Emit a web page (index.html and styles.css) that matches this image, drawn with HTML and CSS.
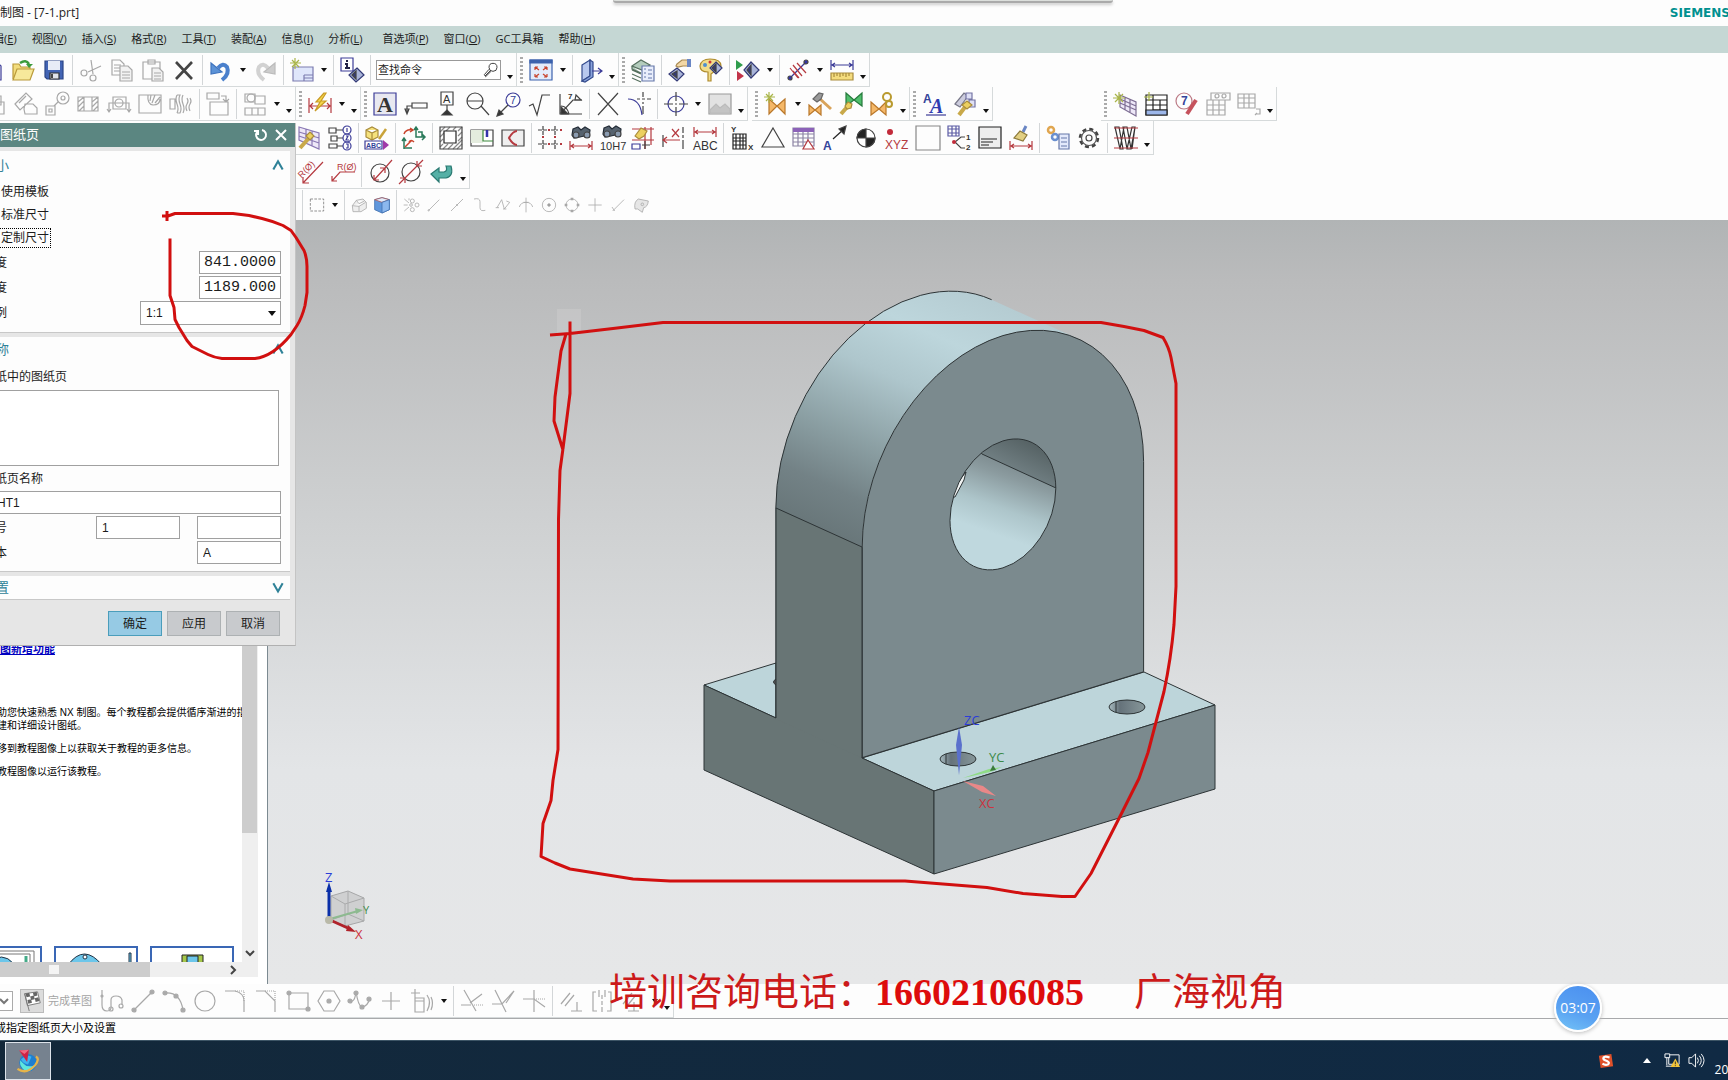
FILE: index.html
```html
<!DOCTYPE html>
<html lang="zh-CN">

<head>
    <title>制图 - [7-1.prt]</title>
    <meta charset="utf-8" />
    <meta name="viewport" content="width=device-width, initial-scale=1" />
    <link rel="stylesheet" href="styles.css">
</head>

<body>
    <header class="titlebar">
        <span>制图 - [7-1.prt]</span>
        <span class="brand">SIEMENS</span>
    </header>
    <div class="topgrip"></div>

    <nav class="menubar">
        <a href="#">编辑(<u>E</u>)</a>
        <a href="#">视图(<u>V</u>)</a>
        <a href="#">插入(<u>S</u>)</a>
        <a href="#">格式(<u>R</u>)</a>
        <a href="#">工具(<u>T</u>)</a>
        <a href="#">装配(<u>A</u>)</a>
        <a href="#">信息(<u>I</u>)</a>
        <a href="#">分析(<u>L</u>)</a>
        <a href="#" class="wide">首选项(<u>P</u>)</a>
        <a href="#">窗口(<u>O</u>)</a>
        <a href="#">GC工具箱</a>
        <a href="#">帮助(<u>H</u>)</a>
    </nav>

    <!-- standard / view / analysis -->
    <div class="row">
        <div class="bar cut1">
            <button class="tb"><svg viewBox="0 0 24 24"><path class="b" d="M5 2h10l6 6v14H5z"/></svg></button>
            <button class="tb"><svg viewBox="0 0 24 24"><path d="M2 21V6h6l2 3h9v3" fill="#f2dc7c" stroke="#b99a3a"/><path d="M2 22l4-11h17l-4 11z" fill="#f7e99b" stroke="#b99a3a"/><path d="M9 5q6-4 9 1" stroke="#3d9c3d" stroke-width="2.5"/><path d="M15 6h7l-4 4z" fill="#3d9c3d" stroke="none"/></svg></button>
            <button class="tb"><svg viewBox="0 0 24 24"><path d="M3 3h18v18H5l-2-2z" fill="#4264b4" stroke="#2c4687"/><path d="M6 3h12v9H6z" fill="#e7ecf6" stroke="none"/><path d="M8 15h9v6H8z" fill="#dfe3ea" stroke="#333"/><path d="M10 16v4" stroke-width="2"/></svg></button>
            <span class="sep"></span>
            <button class="tb off"><svg viewBox="0 0 24 24"><path d="M12 2l2 14M22 8L9 14"/><circle cx="5" cy="15" r="3"/><circle cx="14" cy="20" r="3"/></svg></button>
            <button class="tb off"><svg viewBox="0 0 24 24"><path d="M2 2h8l4 4v11H2zM4 7h7M4 10h7M4 13h6"/><path d="M10 8h8l4 4v11H10z" fill="#f2f2f2"/><path d="M12 14h8M12 17h8M12 20h8"/></svg></button>
            <button class="tb off"><svg viewBox="0 0 24 24"><path d="M2 4h17v17H2zM7 2h7v4H7z"/><path d="M11 10h7l4 4v9H11z" fill="#f2f2f2"/><path d="M13 15h7M13 18h7M13 21h7"/></svg></button>
            <button class="tb"><svg viewBox="0 0 24 24"><path d="M4 4l16 17M20 4L4 21" stroke="#444" stroke-width="2.6"/></svg></button>
            <span class="sep"></span>
            <button class="tb"><svg viewBox="0 0 24 24"><path d="M13 22q8-6 5-13-4-5-9 1" stroke="#4a80cc" stroke-width="4"/><path d="M2 5l11 9-11 2z" fill="#5b92d6" stroke="#3f74bf"/></svg></button>
            <button class="dd"></button>
            <button class="tb"><svg viewBox="0 0 24 24"><path d="M11 22q-8-6-5-13 4-5 9 1" stroke="#d2d2d2" stroke-width="4"/><path d="M22 5l-11 9 11 2z" fill="#ccc" stroke="#bbb"/></svg></button>
            <span class="sep"></span>
            <button class="tb"><svg viewBox="0 0 24 24"><path d="M3 9h20v14H3zM14 17h9M14 17v6M14 20h9" fill="#dfe6fb" stroke="#7c7cb0"/><path d="M5 0v11M0 5h11M2 2l7 7M9 2l-7 7" stroke="#a9b548"/></svg></button>
            <button class="dd"></button>
            <span class="sep"></span>
            <button class="tb"><svg viewBox="0 0 24 24"><path class="b" d="M1 0h12v13H1z" fill="#fff"/><path d="M7 2v2M5 6h2v4M5 10h5" stroke="#224" stroke-width="2"/><path d="M17 10l7 7-8 7-7-7z" fill="#a9b4d8" stroke="#333a77"/><path d="M16 13l-4 4 4 4z" fill="#333a77"/></svg></button>
            <span class="sep"></span>
            <div class="search">
                <input type="text" value="查找命令" aria-label="查找命令">
                <svg viewBox="0 0 24 24"><circle cx="15" cy="8" r="6"/><path d="M11 13l-8 8M9 11l-7 8 2 3 8-8"/></svg>
            </div>
            <button class="dd more"></button>
        </div>
        <div class="bar grip">
            <button class="tb"><svg viewBox="0 0 24 24"><path d="M1 2h22v20H1z" fill="#e3ecfb" stroke="#3c62ad"/><path d="M1 2h22v3H1z" fill="#3c62ad" stroke="#3c62ad"/><path d="M6 9l4 3M18 9l-4 3M6 19l4-3M18 19l-4-3M6 9v3M6 9h3M18 9v3M18 9h-3M6 19v-3M6 19h3M18 19v-3M18 19h-3" stroke="#c8432c"/></svg></button>
            <button class="dd"></button>
            <span class="sep"></span>
            <button class="tb"><svg viewBox="0 0 24 24"><path d="M3 7l8-5v16l-8 5z" fill="#b8c8ee" stroke="#334a8c"/><path d="M11 2l3 2v15l-8 5-3-1 8-5z" fill="#8aa3dc" stroke="#334a8c"/><path class="b" d="M13 13h9M19 10l4 3-4 3"/></svg></button>
            <button class="dd more"></button>
        </div>
        <div class="bar grip">
            <button class="tb"><svg viewBox="0 0 24 24"><path d="M1 8l9-6 9 5-8 5zM1 12l9 4M1 16l9 4M1 20l9 4M1 8v3l9 4" fill="#b3ccbc" stroke="#56705f"/><path d="M11 8h12v15H11z" fill="#e9eefc" stroke="#6678aa"/><path d="M13 11h2M13 15h2M13 19h2M17 12h4M17 16h4M17 20h4" stroke="#6678aa"/></svg></button>
            <span class="sep"></span>
            <button class="tb"><svg viewBox="0 0 24 24"><path d="M9 10l7 6-7 7-8-7z" fill="#a9b4d8" stroke="#333a77"/><path d="M9 13v7l-5-4z" fill="#333a77"/><path d="M9 6l5-4h7v6h-6l-5 1-2-1z" fill="#f3d8a6" stroke="#a98a52"/><path d="M19 1h4v8h-4z" fill="#6a86c4" stroke="none"/></svg></button>
            <button class="tb"><svg viewBox="0 0 24 24"><path d="M1 8q1-7 10-7 11 0 11 7 0 4-5 4l-5 4v7H9v-9q-8 0-8-6z" fill="#f2dd8c" stroke="#ad8a2c"/><circle cx="6" cy="7" r="2" fill="#4f8fd0" stroke="none"/><circle cx="11" cy="4" r="1.500" fill="#c33" stroke="none"/><path d="M17 4l6 6-6 6-6-6z" fill="#a9b4d8" stroke="#333a77"/><path d="M17 6l-4 4 4 4z" fill="#333a77"/></svg></button>
            <span class="sep"></span>
            <button class="tb"><svg viewBox="0 0 24 24"><path d="M0 2l7 5-7 5z" fill="#2f9c4c" stroke="none"/><path d="M1 13l7 5-7 5z" fill="#c2344a" stroke="none"/><path d="M15 4l8 8-8 8-7-8z" fill="#a9b4d8" stroke="#333a77"/><path d="M15 7l-4 5 4 5z" fill="#333a77"/></svg></button>
            <button class="dd"></button>
            <span class="sep"></span>
            <button class="tb"><svg viewBox="0 0 24 24"><path class="b" d="M4 20L20 4"/><path class="r" d="M4 10l8 10M7 7l9 11M11 5l9 10M7 13l6 7"/><circle cx="4" cy="20" r="2" fill="#33a"/><circle cx="20" cy="4" r="2" fill="#33a"/></svg></button>
            <button class="dd"></button>
            <button class="tb"><svg viewBox="0 0 24 24"><path class="b" d="M1 2v10M23 2v10M2 7h20M5 5L2 7l3 2M19 5l3 2-3 2"/><path d="M1 15h22v7H1z" fill="#f4dc7e" stroke="#a98c3c"/><path d="M4 15v4M7 15v3M10 15v4M13 15v3M16 15v4M19 15v3" stroke="#a98c3c"/></svg></button>
            <button class="dd more"></button>
        </div>
    </div>

    <!-- drawing / dimension / annotation -->
    <div class="row">
        <div class="bar cut2">
            <button class="tb off"><svg viewBox="0 0 24 24"><path d="M8 4h10v9H8zM12 10h9v12h-9z"/></svg></button>
            <button class="tb off"><svg viewBox="0 0 24 24"><path d="M1 12L12 1l6 6L6 18zM5 11l7-7M11 12h8l4 4v6H11l-1-5z"/></svg></button>
            <button class="tb off"><svg viewBox="0 0 24 24"><circle cx="18" cy="6" r="6"/><circle cx="18" cy="6" r="2"/><path d="M1 14h9v9H1zM4 17h3v3H4zM9 14l4-4"/></svg></button>
            <button class="tb off"><svg viewBox="0 0 24 24"><path d="M2 5h20v14H2zM8 5v14M16 5v14M2 10l6-5M2 15l6-6M3 19l5-5M16 10l6-5M16 15l6-6M17 19l5-5"/></svg></button>
            <button class="tb off"><svg viewBox="0 0 24 24"><path d="M6 5h13v12H6zM2 20v-9h20v9M0 17l2 3 2-3M20 17l2 3 2-3"/><circle cx="12" cy="11" r="4"/></svg></button>
            <button class="tb off"><svg viewBox="0 0 24 24"><path d="M1 3h22v18H1zM10 3q-1 9 5 10 7 0 7-6M13 3l-1 6M17 3l-3 8M22 5l-5 6"/></svg></button>
            <button class="tb off"><svg viewBox="0 0 24 24"><path d="M1 7h5v10H1zM8 3q-2 4 0 9t0 9M14 3q-2 4 0 9t0 9M8 3h3q-2 4 0 9t0 9H8M18 6q2 3 0 6t0 7M21 6q2 3 0 6t0 7"/></svg></button>
            <span class="sep"></span>
            <button class="tb off"><svg viewBox="0 0 24 24"><path d="M1 1h12v6H1zM4 10h18v13H4zM15 4h5v6M17 7l3 3 3-3"/></svg></button>
            <span class="sep"></span>
            <button class="tb off"><svg viewBox="0 0 24 24"><path d="M2 2h10v8H2zM12 4h10v8H12zM2 16h20v7H2zM9 16v7M15 16v7"/><circle cx="8" cy="6" r="4"/></svg></button>
            <button class="dd"></button>
            <button class="dd more"></button>
        </div>
        <div class="bar grip">
            <button class="tb"><svg viewBox="0 0 24 24"><path class="r" d="M1 6v15M23 6v15M2 14h20M5 11l-3 3 3 3M19 11l3 3-3 3"/><path d="M16 1L8 10h4l-5 9 11-10h-5l5-8z" fill="#f5d84e" stroke="#c99b25"/></svg></button>
            <button class="dd"></button>
            <button class="dd more"></button>
        </div>
        <div class="bar grip">
            <button class="tb"><svg viewBox="0 0 24 24"><path class="b" d="M1 1h22v22H1z" fill="#e8e8f0"/><text x="4" y="20" class="ser">A</text></svg></button>
            <button class="tb"><svg viewBox="0 0 24 24"><path d="M3 20v-6h5M8 11h15v5H8zM1 17l2 5 2-5z"/></svg></button>
            <button class="tb"><svg viewBox="0 0 24 24"><path d="M6 0h12v13H6zM12 13v8"/><path d="M7 23l5-5 5 5z" fill="#333"/><text x="8" y="11" class="t11">A</text></svg></button>
            <button class="tb"><svg viewBox="0 0 24 24"><circle cx="9" cy="9" r="8"/><path d="M1 9h16M15 14l8 9"/></svg></button>
            <button class="tb"><svg viewBox="0 0 24 24"><circle class="b" cx="16" cy="8" r="7"/><text x="13" y="12" class="t11 tb1">7</text><path d="M11 13l-9 9"/><path d="M0 24l2-6 4 4z" fill="#333"/></svg></button>
            <button class="tb"><svg viewBox="0 0 24 24"><path d="M1 14l4-2 4 11 5-20h8"/></svg></button>
            <button class="tb"><svg viewBox="0 0 24 24"><path d="M1 2v20h22M2 21L14 8h9M2 14q6 0 8 8"/><path d="M2 22v-7l7 7z" fill="#333"/><text x="9" y="7" class="t8">7</text><path d="M17 3l5 5h-6z"/></svg></button>
            <span class="sep"></span>
            <button class="tb"><svg viewBox="0 0 24 24"><path d="M2 1l20 22M22 1L2 23"/></svg></button>
            <button class="tb"><svg viewBox="0 0 24 24"><path d="M16 0v5M16 10v2M16 14v8M10 7h3M15 7h3M20 7h4"/><path class="b" d="M1 7q12 0 14 16"/></svg></button>
            <span class="sep"></span>
            <button class="tb"><svg viewBox="0 0 24 24"><circle class="b" cx="12" cy="12" r="8"/><path d="M12 0v9M12 15v9M0 12h9M15 12h9M11 12h2"/></svg></button>
            <button class="dd"></button>
            <button class="tb"><svg viewBox="0 0 24 24"><path d="M1 2h22v20H1z" fill="#e2e2e2" stroke="#999"/><path d="M2 18l6-6 4 4 5-4 5 5v4H2z" fill="#c4c4c4" stroke="#bbb"/></svg></button>
            <button class="dd more"></button>
        </div>
        <div class="bar grip gap-s">
            <button class="tb"><svg viewBox="0 0 24 24"><path d="M5 7l8 7-8 8zM21 7l-8 7 8 8z" fill="#f5b868" stroke="#b9772a"/><path d="M5 0v11M0 5h11M2 2l7 7M9 2L2 9" stroke="#a9b548"/></svg></button>
            <button class="dd"></button>
            <button class="tb"><svg viewBox="0 0 24 24"><path d="M1 13l6 5-6 5zM13 13l-6 5 6 5z" fill="#f5b868" stroke="#b9772a"/><path d="M11 6l12 11" stroke="#d9a35a" stroke-width="3"/><path d="M5 7l6-6 4 1-2 5-4 3z" fill="#999" stroke="#666"/></svg></button>
            <button class="tb"><svg viewBox="0 0 24 24"><path d="M7 1l8 7-8 6zM23 1l-8 7 8 6z" fill="#4fbe6c" stroke="#267a3c"/><path d="M2 22l7-8" stroke="#c9a94a" stroke-width="4"/><path d="M6 14l3-4 4 2-1 4-4 1z" fill="#ecd060" stroke="#a98c3c"/></svg></button>
            <button class="tb"><svg viewBox="0 0 24 24"><path d="M1 10l8 7-8 6zM16 10l-7 7 7 6z" fill="#f5b868" stroke="#b9772a"/><circle cx="17" cy="5" r="4" stroke="#b99a2f" stroke-width="2"/><circle cx="19" cy="12" r="3" stroke="#b99a2f" stroke-width="2"/></svg></button>
            <button class="dd more"></button>
        </div>
        <div class="bar grip">
            <button class="tb"><svg viewBox="0 0 24 24"><text x="1" y="11" class="t12 tb1">A</text><text x="8" y="21" class="ser it">A</text><path class="b" d="M4 23h20"/></svg></button>
            <button class="tb"><svg viewBox="0 0 24 24"><path d="M2 12l9-11 4 3-8 11z" fill="#ccd" stroke="#778"/><path d="M13 1h6v6h-6zM16 8h6v7h-6z" fill="#dfe0f5" stroke="#7474a4"/><path d="M6 23l6-8" stroke="#c9a94a" stroke-width="4"/><path d="M9 13l5-4 5 4-5 4z" fill="#ecd060" stroke="#a98c3c"/></svg></button>
            <button class="dd more"></button>
        </div>
        <div class="bar grip gap-l">
            <button class="tb"><svg viewBox="0 0 24 24"><path d="M7 3l16 7v14L7 15zM7 7l16 7M7 11l16 7M12 5v13M17 7v13" fill="#eee8f8" stroke="#7d6d93"/><path d="M6 0v12M0 6h12M2 2l8 8M10 2l-8 8" stroke="#a9b548"/></svg></button>
            <button class="tb"><svg viewBox="0 0 24 24"><path d="M2 3h21v20H2zM2 8h21M2 13h21M9 3v20M9 18h14M16 8v15" fill="#fff" stroke="#222"/><path d="M2 18h21v5H2z" fill="#9db7ea" stroke="#222"/><path d="M5 0v9M0 5h9" stroke="#a9b548"/></svg></button>
            <button class="tb"><svg viewBox="0 0 24 24"><circle cx="9" cy="9" r="8" stroke="#bc7b86"/><text x="6" y="13" class="t12 tb1">7</text><path d="M12 22l9-14" stroke="#c5525c" stroke-width="4"/></svg></button>
            <button class="tb off"><svg viewBox="0 0 24 24"><path d="M5 1h19v7H5zM1 8h18v15H1zM1 13h18M7 8v15M13 8v15M1 18h18"/><circle cx="11" cy="4" r="2"/><circle cx="18" cy="4" r="2"/></svg></button>
            <button class="tb off"><svg viewBox="0 0 24 24"><path d="M1 2h17v14H1zM1 6h17M1 11h17M7 2v14M12 2v14M19 17h4v5h-4M20 21l-2 2"/></svg></button>
            <button class="dd more"></button>
        </div>
    </div>

    <!-- drafting tools -->
    <div class="row">
        <div class="bar from3">
            <button class="tb"><svg viewBox="0 0 24 24"><path d="M2 1l20 6v16L2 14zM2 6l20 6M2 10l20 7M9 3v14M15 5v15" fill="#eee8f8" stroke="#8a78b4"/><path d="M3 22l9-10" stroke="#c9a94a" stroke-width="4"/><path d="M9 10l4-4 4 4-4 4z" fill="#ecd060" stroke="#a98c3c"/></svg></button>
            <button class="tb"><svg viewBox="0 0 24 24"><path d="M1 2h7v5H1zM3 10h6v5H3zM1 18h8v4H1zM8 4h7M9 12h6M9 20h6"/><circle class="b" cx="19" cy="4" r="4"/><circle class="b" cx="19" cy="12" r="4"/><circle class="b" cx="19" cy="20" r="4"/><path class="b" d="M19 2v4M18 10h2l-2 4h3M18 18h2v4h-2"/></svg></button>
            <span class="sep"></span>
            <button class="tb"><svg viewBox="0 0 24 24"><path d="M1 4l6-3 6 3v7l-6 3-6-3zM1 4l6 3 6-3M7 7v7" fill="#f6e27c" stroke="#a98c3c"/><path d="M21 3l-7 10" stroke="#c9a33a" stroke-width="2.500"/><path class="b" d="M0 15h17v8H0z" fill="#fff"/><text x="1" y="22" class="t7 tb1">ABC</text><path d="M18 14l6 5-6 5z" fill="#a03aa8" stroke="none"/></svg></button>
            <span class="sep"></span>
            <button class="tb"><svg viewBox="0 0 24 24"><path d="M2 23V13M0 15l2-3 2 3M2 22h8" stroke="#2a7a5a" stroke-width="1.500"/><path d="M14 2v9h9M12 4l2-3 2 3M20 8l3 3-3 3M16 6h4v5" stroke="#2a7a5a" stroke-width="1.500"/><path d="M2 8q2-5 8-4M8 2l3 2-3 2M3 21l6-6M7 16q2-3 5 0" stroke="#c8432c" stroke-width="1.500"/></svg></button>
            <span class="sep"></span>
            <button class="tb"><svg viewBox="0 0 24 24"><path d="M1 6l5-5M1 11L11 1M1 16L4 13M1 21l3-3M14 4l3-3M19 5l4-4M19 10l4-4M19 15l4-4M4 23l5-5M9 23l5-5M14 23l9-9M18 23l5-5" stroke="#888"/><path d="M1 1h22v22H1z"/><path d="M5 5h12v12H5z" fill="#fff" stroke="#222"/></svg></button>
            <button class="tb"><svg viewBox="0 0 24 24"><path d="M1 4h22v16H1z" fill="#fff"/><path d="M1 4h12v13H1z" fill="#e4ecde" stroke="none"/><path d="M13 4v11h10" stroke="#3c8a3c"/><path d="M17 4v7" stroke="#33a" stroke-width="2.500"/></svg></button>
            <button class="tb"><svg viewBox="0 0 24 24"><path d="M1 4h22v16H1z" fill="#efefef"/><path class="r" d="M16 5q-4 0-8 7 4 7 8 7" stroke-width="2"/></svg></button>
            <span class="sep"></span>
            <button class="tb"><svg viewBox="0 0 24 24"><path d="M5 0v9M0 4h10M17 0v9M13 4h7M5 14v9M0 18h10M17 14v9M13 18h7" stroke-dasharray="4 1"/><path class="r" d="M10 4h2M22 4h2M10 18h2M22 18h2M5 10v2M17 10v2" stroke-width="2"/></svg></button>
            <button class="tb"><svg viewBox="0 0 24 24"><path d="M4 3l5-2 3 3 4-3 5 3-1 7-5-1-4 1-6 1-2-3z" fill="#56626e" stroke="#222b36"/><circle cx="7" cy="9" r="3" fill="#8a9bb0"/><circle cx="18" cy="9" r="3" fill="#8a9bb0"/><path class="r" d="M1 15v9M23 15v9M2 20h20M5 18l-3 2 3 2M19 18l3 2-3 2"/></svg></button>
            <button class="tb"><svg viewBox="0 0 24 24"><path d="M4 2l5-2 3 3 4-3 5 3-1 7-5-1-4 1-6 1-2-3z" fill="#56626e" stroke="#222b36"/><circle cx="7" cy="8" r="3" fill="#8a9bb0"/><circle cx="18" cy="8" r="3" fill="#8a9bb0"/><text x="0" y="24" class="t11">10H7</text></svg></button>
            <button class="tb"><svg viewBox="0 0 24 24"><path class="r" d="M1 3h22M1 14h22M14 1v22M20 1v18"/><path d="M4 10l6-8 6 3-3 5-5 3z" fill="#ecd060" stroke="#a98c3c"/><path class="b" d="M1 18h8v5H1z"/><path d="M11 19h8M14 15v8"/></svg></button>
            <button class="tb"><svg viewBox="0 0 24 24"><path d="M1 9v12M21 1v6M21 9v3M21 14v9"/><path class="r" d="M1 14h17M5 11l-4 3 4 3M10 3l7 8M17 3l-7 8"/></svg></button>
            <button class="tb"><svg viewBox="0 0 24 24"><path class="r" d="M1 1v10M23 1v10M2 6h20M5 4L2 6l3 2M19 4l3 2-3 2"/><text x="0" y="24" class="t12n">ABC</text></svg></button>
            <span class="sep"></span>
            <button class="tb"><svg viewBox="0 0 24 24"><path d="M3 8h13v15H3zM3 12h13M3 15h13M3 19h13M6 8v15M10 8v15M13 8v15" stroke="#222"/><text x="1" y="6" class="t8">Y</text><text x="18" y="24" class="t8">X</text></svg></button>
            <button class="tb"><svg viewBox="0 0 24 24"><path d="M12 2l11 19H1z"/></svg></button>
            <button class="tb"><svg viewBox="0 0 24 24"><path d="M1 2h21v18H1zM1 8h21M1 12h21M1 16h21M6 2v18M11 2v18M16 2v18" stroke="#8c84a4"/><path d="M1 2h21v4H1z" fill="#8c62b8" stroke="none"/><path class="r" d="M16 14l6 9H11z" fill="#fff"/></svg></button>
            <button class="tb"><svg viewBox="0 0 24 24"><text x="0" y="24" class="t12 tb1">A</text><path d="M10 13L21 3" stroke="#222"/><path d="M23 0l-2 8-5-5z" fill="#222"/></svg></button>
            <button class="tb"><svg viewBox="0 0 24 24"><circle cx="12" cy="12" r="9" fill="#fff"/><path d="M12 12V3a9 9 0 0 0-9 9zM12 12v9a9 9 0 0 0 9-9z" fill="#222"/></svg></button>
            <button class="tb"><svg viewBox="0 0 24 24"><circle cx="5" cy="6" r="3" fill="#c22b3a" stroke="none"/><text x="0" y="23" class="t12n tr">XYZ</text></svg></button>
            <button class="tb"><svg viewBox="0 0 24 24"><path d="M0 0h24v24H0z" stroke="#888"/></svg></button>
            <button class="tb"><svg viewBox="0 0 24 24"><path d="M1 0h11v10H1zM1 3h11M1 7h11M5 0v10M9 0v10" stroke="#5a5aa4"/><path d="M18 11h-4l-6 5 6 6h4"/><circle cx="7" cy="16" r="2" fill="#c22b3a" stroke="none"/><text x="19" y="14" class="t8">1</text><text x="19" y="24" class="t8">2</text></svg></button>
            <button class="tb"><svg viewBox="0 0 24 24"><path d="M1 1h22v21H1z" fill="#eee" stroke="#222"/><path d="M3 13h16M3 16h12M3 19h8" stroke="#222"/></svg></button>
            <button class="tb"><svg viewBox="0 0 24 24"><path d="M17 0l-3 6" stroke="#6a86c4" stroke-width="3"/><path d="M11 5l7 4-4 6-9-3z" fill="#e2cf82" stroke="#8c7a3c"/><path class="r" d="M1 15v9M23 15v9M2 20h20M5 18l-3 2 3 2M19 18l3 2-3 2"/></svg></button>
            <span class="sep"></span>
            <button class="tb"><svg viewBox="0 0 24 24"><circle cx="5" cy="4" r="3" stroke="#e0a650" stroke-width="2.500"/><circle cx="9" cy="11" r="3" stroke="#6a90d0" stroke-width="2.500"/><path d="M13 8h10v15H13z" fill="#e3e9fb" stroke="#6678aa"/><path d="M15 12h6M15 16h6M15 20h6" stroke="#6678aa"/></svg></button>
            <button class="tb"><svg viewBox="0 0 24 24"><circle cx="12" cy="12" r="9" stroke-width="2.500" stroke-dasharray="4 3.07"/><circle cx="12" cy="12" r="7.500" stroke="#555"/><circle cx="12" cy="12" r="3"/></svg></button>
            <span class="sep"></span>
            <button class="tb"><svg viewBox="0 0 24 24"><path d="M1 1h4l4 22h-3zM9 1h4l4 22h-4zM9 23h-3L10 1M17 23h-4L18 1h3zM21 1l-3 22" stroke="#333"/><path class="r" d="M0 2h24M0 12h24M0 22h24"/></svg></button>
            <button class="dd more"></button>
        </div>
    </div>

    <!-- radius / diameter -->
    <div class="row">
        <div class="bar from4">
            <button class="tb"><svg viewBox="0 0 24 24"><path class="r" d="M23 2L3 23M3 17v6h6"/><text x="1" y="17" class="t9 tr" transform="rotate(-45 3 17)">R(Ø)</text></svg></button>
            <button class="tb"><svg viewBox="0 0 24 24"><path class="r" d="M24 12H9L1 21M1 16v5h5"/><text x="6" y="10" class="t9 tr">R(Ø)</text></svg></button>
            <span class="sep"></span>
            <button class="tb"><svg viewBox="0 0 24 24"><circle cx="12" cy="13" r="9"/><path class="r" d="M6 20L17 8M6 15v5h5M12 8h5v5"/><path class="r" d="M17 8l7-8"/></svg></button>
            <button class="tb"><svg viewBox="0 0 24 24"><circle cx="12" cy="12" r="9"/><path class="r" d="M0 24L24 0M1 18l5 0 0 5M18 1v5h5"/></svg></button>
            <button class="tb"><svg viewBox="0 0 24 24"><path d="M1 14l8-6v4h5q4-1 2-6h5q3 10-5 12H9v4z" fill="#56b0a6" stroke="#2a7a72"/></svg></button>
            <button class="dd more"></button>
        </div>
    </div>

    <!-- selection bar -->
    <div class="row selbar">
        <div class="bar from5">
            <span class="sep"></span>
            <button class="tb off"><svg viewBox="0 0 24 24"><path d="M2 3h20v18H2z" stroke-dasharray="4 2" stroke="#777"/></svg></button>
            <button class="dd"></button>
            <span class="sep"></span>
            <button class="tb off"><svg viewBox="0 0 24 24"><path d="M2 13l6-8 10-2 5 5v9l-8 5H3zM2 13l10 1 10-6M12 14v7M8 5l4 5 8-4" fill="#eee"/></svg></button>
            <button class="tb"><svg viewBox="0 0 24 24"><path d="M1 4l11-3 11 3v15l-11 5-11-5z" fill="#5f97dc" stroke="#3f6fae"/><path d="M1 4l11 4 11-4-11-3z" fill="#e2ecfa" stroke="#a55"/><path d="M12 8v16l11-5V4z" fill="#8cb8ee" stroke="#3f6fae"/></svg></button>
            <span class="sep"></span>
            <button class="tb off"><svg viewBox="0 0 24 24"><path d="M2 3l7 6M1 12h6M2 21l7-6M9 2v3"/><circle cx="14" cy="6" r="3"/><circle cx="21" cy="12" r="3"/><circle cx="14" cy="19" r="3"/><circle cx="12" cy="12" r="2"/></svg></button>
            <button class="tb off"><svg viewBox="0 0 24 24"><path d="M4 20L20 4"/><circle cx="4" cy="20" r="1"/></svg></button>
            <button class="tb off"><svg viewBox="0 0 24 24"><path d="M3 21L21 3"/><circle cx="12" cy="12" r="1"/></svg></button>
            <button class="tb off"><svg viewBox="0 0 24 24"><path d="M3 3q9-2 9 4v9q0 6 8 4"/></svg></button>
            <button class="tb off"><svg viewBox="0 0 24 24"><path d="M3 16l7-12 4 14 8-10M1 16h5M12 18h5M22 8l-5-2"/></svg></button>
            <button class="tb off"><svg viewBox="0 0 24 24"><path d="M12 1v22M2 15q2-7 10-7t10 7M8 8h8"/></svg></button>
            <button class="tb off"><svg viewBox="0 0 24 24"><circle cx="12" cy="12" r="10"/><circle cx="12" cy="12" r="2" fill="#999"/></svg></button>
            <button class="tb off"><svg viewBox="0 0 24 24"><circle cx="12" cy="12" r="9"/><path d="M12 1v4M12 19v4M1 12h4M19 12h4" stroke-width="4"/></svg></button>
            <button class="tb off"><svg viewBox="0 0 24 24"><path d="M12 2v20M2 12h20"/></svg></button>
            <button class="tb off"><svg viewBox="0 0 24 24"><path d="M4 21L21 4M3 15l4 6"/></svg></button>
            <button class="tb off"><svg viewBox="0 0 24 24"><path d="M3 18q-2-11 5-15l15 3q-1 9-7 10l-2 7-7-5z" fill="#e6e6e6"/><circle cx="14" cy="11" r="2"/></svg></button>
        </div>
    </div>

    <main class="work">
        <aside class="resource">
            <div class="doc">
                <div class="doc-text">
                    <a href="#">制图新增功能</a>
                    <p>将帮助您快速熟悉 NX 制图。每个教程都会提供循序渐进的指导<br>于创建和详细设计图纸。</p>
                    <p>光标移到教程图像上以获取关于教程的更多信息。</p>
                    <p>单击教程图像以运行该教程。</p>
                </div>
                <div class="thumbs">
                    <div class="thumb"><svg viewBox="0 0 80 16"><path d="M0 3h74v14M0 6h70v11" stroke="#777"/><path d="M28 16q14-14 26 0z" fill="#6cc6ea" stroke="#234"/><path d="M66 8v8" stroke="#4a8" stroke-width="3"/></svg></div>
                    <div class="thumb"><svg viewBox="0 0 80 16"><path d="M12 17q16-22 34 0z" fill="#6cc6ea" stroke="#234"/><circle cx="29" cy="9" r="2" fill="#fff" stroke="#234"/><path d="M73 5h2v12h-2z" stroke="#234" fill="#6cc6ea"/></svg></div>
                    <div class="thumb"><svg viewBox="0 0 80 16"><path d="M30 7h21v10H30z" fill="#a6c84a" stroke="#222"/><path d="M35 8h11v9H35z" fill="#6cc6ea" stroke="#222"/></svg></div>
                </div>
            </div>
            <div class="vscroll"><span class="vthumb"></span><svg viewBox="0 0 16 16"><path d="M4 6l4 4 4-4"/></svg></div>
            <div class="hscroll"><span class="hthumb"></span><svg viewBox="0 0 16 16"><path d="M6 4l4 4-4 4"/></svg></div>
        </aside>

        <section class="viewport">
            <svg class="scene" viewBox="268 220 1460 764" preserveAspectRatio="xMinYMin meet">
                <defs>
                    <linearGradient id="gArch" gradientUnits="userSpaceOnUse" x1="-.283" y1=".448" x2=".534" y2="-.845">
                        <stop offset="0" stop-color="#69777a"/>
                        <stop offset=".15" stop-color="#738286"/>
                        <stop offset=".34" stop-color="#8b9fa3"/>
                        <stop offset=".6" stop-color="#aec6cc"/>
                        <stop offset=".8" stop-color="#bdd6dc"/>
                        <stop offset="1" stop-color="#b5ccd2"/>
                    </linearGradient>
                    <linearGradient id="gBore" gradientUnits="userSpaceOnUse" x1="1025" y1="455" x2="990" y2="555">
                        <stop offset="0" stop-color="#738084"/>
                        <stop offset=".25" stop-color="#8b9b9f"/>
                        <stop offset=".55" stop-color="#adc5ca"/>
                        <stop offset=".8" stop-color="#bfd8de"/>
                    </linearGradient>
                    <linearGradient id="gBoreTop" gradientUnits="userSpaceOnUse" x1="1035" y1="440" x2="1015" y2="480">
                        <stop offset="0" stop-color="#535f61"/>
                        <stop offset="1" stop-color="#77868a"/>
                    </linearGradient>
                    <linearGradient id="gPin">
                        <stop offset="0" stop-color="#a9bdc2"/>
                        <stop offset=".3" stop-color="#65727a"/>
                        <stop offset="1" stop-color="#87979a"/>
                    </linearGradient>
                    <clipPath id="bore"><circle r=".376" transform="matrix(140.7 -42.9 0 168.8 1002.9 504.4)"/></clipPath>
                </defs>
                <rect x="557" y="309" width="24" height="24" fill="#fff" opacity=".12"/>
                <g class="part">
                    <path fill="#bdd5da" d="M704 685l72-22v55zM862 758l282-86 71 33-281 86z"/>
                    <path fill="#687575" d="M704 685l72 33V508l86 39v211l72 33v83l-230-104z"/>
                    <path fill="#7b8a8e" d="M934 791l281-86v84l-281 85z"/>
                    <path d="M776 679q-5 3 0 6" fill="#555"/>
                    <g transform="matrix(140.7 -42.9 0 168.8 1002.9 504.4)">
                        <path fill="url(#gArch)" d="M-1 .254L-1.614-.134V-.388A1 1 0 0 1-.08-1.233L.534-.845A1 1 0 0 0-1 0z" stroke="none"/>
                        <path d="M-1.614-.388A1 1 0 0 1-.08-1.233"/>
                        <path fill="#7b8a8e" d="M-1 1.246V0A1 1 0 0 1 1 0V1.246z"/>
                    </g>
                    <path fill="#687575" d="M776 508l86 39v211l-86-39z" stroke="none"/>
                    <path d="M776 718V508l86 39v211"/>
                    <g clip-path="url(#bore)">
                        <path fill="url(#gBore)" stroke="none" d="M940 430h130v150H940z"/>
                        <path fill="url(#gBoreTop)" d="M982 454l74 34 10-60H960z"/>
                        <path fill="#f1f4f4" d="M953 497q3-14 13-25l-2 8-9 17z"/>
                    </g>
                    <circle r=".376" transform="matrix(140.7 -42.9 0 168.8 1002.9 504.4)"/>
                    <ellipse cx="958" cy="759" rx="18" ry="7" fill="url(#gPin)"/>
                    <ellipse cx="1127" cy="707" rx="18" ry="7" fill="url(#gPin)"/>
                    <path d="M946 754v10M1116 702v10"/>
                </g>
                <g class="axes">
                    <path d="M959 775l-3-30 3-18 3 18z" fill="#5a70cc"/>
                    <path d="M963 778l26-9 13-2-12 5z" fill="#8fdc86"/>
                    <path d="M990 771l3-6 3 5z" fill="#3b7a3b"/>
                    <path d="M963 781l20 5 13 10-14-4z" fill="#e88888"/>
                    <text x="964" y="725" fill="#2c3ed8">ZC</text>
                    <text x="989" y="762" fill="#3d8a48">YC</text>
                    <text x="979" y="808" fill="#cc3340">XC</text>
                </g>
                <g class="axes">
                    <path d="M331 896l17-5 16 7v23l-19 5-14-6z" fill="#cfd0d1" stroke="#a6a7a8"/>
                    <path d="M331 896l14 8 19-6M345 904v22M348 891v23l16 7M348 914l-17 6" fill="none" stroke="#aaabac"/>
                    <path d="M330 919l28-8" stroke="#8dba90" stroke-width="2"/><path d="M355 908l8 2-7 4z" fill="#8dba90"/>
                    <path d="M329 919v-30" stroke="#0a2fa8" stroke-width="3"/><path d="M326 892l3-10 3 10z" fill="#0a2fa8"/>
                    <path d="M330 920l20 9" stroke="#b0222a" stroke-width="3"/><path d="M348 925l8 7-10-1z" fill="#b0222a"/>
                    <circle cx="329" cy="920" r="4" fill="#b9b9a8"/>
                    <text x="325" y="882" fill="#2c3ed8">Z</text>
                    <text x="363" y="914" fill="#3d8a48" class="sm">Y</text>
                    <text x="355" y="939" fill="#cc3340">X</text>
                </g>
            </svg>
        </section>
    </main>

    <div class="row sketch">
        <div class="bar cut6">
            <select class="mini" aria-label="草图"><option></option></select>
            <button class="finish" disabled><svg viewBox="0 0 24 24"><path d="M4 4l14-2 3 12-14 3z" fill="#fff" stroke="#777"/><path d="M5 4l4-1 1 4-4 1zM13 3l4-1 1 4-4 1zM10 7l4-1 1 4-4 1zM7 11l4-1 1 4-4 1zM15 9l4-1 1 4-4 1z" fill="#666" stroke="none"/><path d="M4 4l5 19" stroke="#777"/></svg><span>完成草图</span></button>
            <button class="tb off"><svg viewBox="0 0 24 24"><path d="M2 1v15q0 6 5 6t4-6V11q0-4 5-4t6 4v5"/><circle cx="2" cy="7" r="1"/><circle cx="11" cy="20" r="2"/><circle cx="21" cy="17" r="2"/></svg></button>
            <button class="tb off"><svg viewBox="0 0 24 24"><path d="M3 21L21 3"/><circle cx="3" cy="21" r="2" fill="#aaa"/><circle cx="21" cy="3" r="2" fill="#aaa"/></svg></button>
            <button class="tb off"><svg viewBox="0 0 24 24"><path d="M2 4q16-2 19 17"/><circle cx="3" cy="4" r="2" fill="#aaa"/><circle cx="14" cy="7" r="2" fill="#aaa"/><circle cx="21" cy="21" r="2" fill="#aaa"/></svg></button>
            <button class="tb off"><svg viewBox="0 0 24 24"><circle cx="12" cy="12" r="10"/></svg></button>
            <button class="tb off"><svg viewBox="0 0 24 24"><path d="M1 2h10q9 2 9 10v11"/><path d="M11 2h9v10" stroke-dasharray="1 1"/></svg></button>
            <button class="tb off"><svg viewBox="0 0 24 24"><path d="M1 2h9l10 10v11"/><path d="M10 2h10v10" stroke-dasharray="1 1"/></svg></button>
            <button class="tb off"><svg viewBox="0 0 24 24"><path d="M3 4h19v16H3z"/><circle cx="3" cy="4" r="2" fill="#aaa"/><circle cx="22" cy="20" r="2" fill="#aaa"/></svg></button>
            <button class="tb off"><svg viewBox="0 0 24 24"><path d="M7 2h10l6 10-6 10H7L1 12z"/><circle cx="12" cy="12" r="2" fill="#aaa"/></svg></button>
            <button class="tb off"><svg viewBox="0 0 24 24"><path d="M2 12q5 2 6-10 2 15 6 16 6-1 8-9"/><circle cx="2" cy="12" r="2" fill="#aaa"/><circle cx="8" cy="4" r="2" fill="#aaa"/><circle cx="14" cy="18" r="2" fill="#aaa"/><circle cx="21" cy="10" r="2" fill="#aaa"/></svg></button>
            <button class="tb off"><svg viewBox="0 0 24 24"><path d="M12 3v18M3 12h18"/></svg></button>
            <button class="tb off"><svg viewBox="0 0 24 24"><path d="M5 0v9M1 4h9M5 9h9v14H5zM5 12h9M17 6q5 7 0 16M21 8q3 6 0 13"/></svg></button>
            <button class="dd"></button>
            <span class="sep"></span>
            <button class="tb off"><svg viewBox="0 0 24 24"><path d="M4 1l12 21M1 16h10M10 14l12-9"/><path d="M14 16h9" stroke-dasharray="1 1"/></svg></button>
            <button class="tb off"><svg viewBox="0 0 24 24"><path d="M4 1l11 22M1 15h10l12-13-8 12"/></svg></button>
            <button class="tb off"><svg viewBox="0 0 24 24"><path d="M12 1v22M1 10h11l11 8"/><path d="M12 10h11" stroke-dasharray="1 1"/></svg></button>
            <span class="sep"></span>
            <button class="tb off"><svg viewBox="0 0 24 24"><path d="M2 15L11 4M6 17L15 6M12 22h11M18 13v9"/></svg></button>
            <button class="tb off"><svg viewBox="0 0 24 24"><path d="M6 3H3v19h4M18 3h3v19h-4M9 1v7M15 1v7M12 6v4M12 12v4M12 18v5"/></svg></button>
            <button class="tb off"><svg viewBox="0 0 24 24"><path d="M2 15L11 4M6 17L15 6M7 22h11M13 13v9"/></svg></button>
            <button class="dd"></button>
            <button class="dd more"></button>
        </div>
    </div>
    <div class="status">择或指定图纸页大小及设置</div>

    <footer class="taskbar">
        <button class="app"><svg viewBox="0 0 32 32"><circle cx="16" cy="18" r="10" fill="#1f7fd0"/><path d="M7 15q-1 8 6 12 8 1 10-6-8 3-12-2z" fill="#5fe6dc"/><path d="M8 14q6-6 12-3l-4 9q-6-1-8-6z" fill="#3fb4ee"/><path d="M4 25q10 7 20-4 6-8 1-10" fill="none" stroke="#e6b44a" stroke-width="2.500"/><path d="M6 4l11-1-2 14z" fill="#cf2244"/><path d="M6 4l11-1-5 5z" fill="#ee6a80"/></svg></button>
        <div class="tray">
            <svg class="sogou" viewBox="0 0 18 18"><path d="M1 3l14-2 2 14-14 2z" fill="#e0512a"/><path d="M13 5q-7-2-7 1 0 2 4 3 4 2 1 4-3 1-6-1" fill="none" stroke="#fff" stroke-width="2.500"/></svg>
            <svg class="up" viewBox="0 0 8 8"><path d="M0 6l4-5 4 5z" fill="#fff"/></svg>
            <svg class="net" viewBox="0 0 18 18"><path d="M1 2h5v4H1zM6 3h10v10H5V6M3 6v8M2 15h8" fill="none" stroke="#fff"/><path d="M12 7l5 9H7z" fill="#f2c53a"/><path d="M12 10v3M12 14v1" stroke="#333"/></svg>
            <svg class="net" viewBox="0 0 18 18"><path d="M1 6h3l4-4v14l-4-4H1zM10 6q2 3 0 6M12 4q4 5 0 10M14 2q6 7 0 14" fill="none" stroke="#fff"/></svg>
            <span class="clock">2019</span>
        </div>
    </footer>

    <form class="dialog">
        <div class="dlg-head">
            <span>图纸页</span>
            <button type="button"><svg viewBox="0 0 16 16"><path d="M4 5a5 5 0 1 0 5-2M1 4h4v4" /></svg></button>
            <button type="button"><svg viewBox="0 0 16 16"><path d="M3 3l10 10M13 3L3 13"/></svg></button>
        </div>
        <div class="sect">
            <h3>大小<svg viewBox="0 0 12 12"><path d="M2 9l4-7 4 7"/></svg></h3>
            <label class="opt"><input type="radio" name="size"><span>使用模板</span></label>
            <label class="opt"><input type="radio" name="size"><span>标准尺寸</span></label>
            <label class="opt"><input type="radio" name="size" checked><span class="focus">定制尺寸</span></label>
            <div class="field"><label for="h">高度</label><input id="h" class="num" type="text" value="841.00000"></div>
            <div class="field"><label for="w">长度</label><input id="w" class="num" type="text" value="1189.00000"></div>
            <div class="field pick"><label for="scale">比例</label><select id="scale"><option>1:1</option></select></div>
        </div>
        <div class="sect names">
            <h3>名称<svg viewBox="0 0 12 12"><path d="M2 9l4-7 4 7"/></svg></h3>
            <label class="line" for="sheets">图纸中的图纸页</label>
            <textarea id="sheets"></textarea>
            <label class="line" for="sheetname">图纸页名称</label>
            <div class="field"><input id="sheetname" class="full" type="text" value="SHT1"></div>
            <div class="field"><label for="no">页号</label><input id="no" type="text" value="1"><input class="second" type="text" aria-label="副页号"></div>
            <div class="field"><label for="rev">版本</label><input id="rev" type="text" value="A"></div>
        </div>
        <div class="sect closed">
            <h3>设置<svg viewBox="0 0 12 12"><path d="M2 2l4 7 4-7"/></svg></h3>
        </div>
        <div class="actions">
            <button type="button" class="ok">确定</button>
            <button type="button">应用</button>
            <button type="button">取消</button>
        </div>
    </form>

    <svg class="ink" viewBox="0 0 1728 1080" preserveAspectRatio="xMinYMin meet">
        <path d="M162 216h6l7-2.500h58l16 2 13 3q12 3 21 7l8 5 5 7 8 13q3 7 3 16v26l-2 13q-3 12-8 20l-6 9q-9 11-18 17-9 6-18 7h-33q-8-1-14-4l-16-8-5-6-8-13-4-8-1-12-4-12v-57M167 211v10"/>
        <path d="M550 335l20-1.500 43-5 50-6h438l23 4 20 4 19 7q6 10 8 20l5 26v203l-2 38q-3 34-10 67l-16 61-9 26-17 34-31 61-16 23h-13l-39-3-36-6-82-6.500H670l-37-2-63-10-15-6-14-6.500 2-33 8-23 2-20 5-31 .5-230 1.500-49 3-22 5.500-43 1.500-12v-72M563 450l-9-29 1-24 6-46 5-17"/>
    </svg>
    <div class="caption">培训咨询电话：<b>16602106085</b><span>广海视角</span></div>
    <div class="ball">03:07</div>
</body>

</html>
```
FILE: styles.css
```css
* {
    box-sizing: border-box;
}

body {
    margin: 0;
    height: 100vh;
    display: flex;
    flex-direction: column;
    position: relative;
    overflow: hidden;
    background: #fdfdfd;
    color: #1c1c1c;
    font: 12px/16px "Liberation Sans", "Noto Sans CJK SC", sans-serif;
}

button, input, select, textarea {
    font: inherit;
    color: inherit;
    margin: 0;
    border-radius: 0;
}

svg {
    display: block;
    flex: none;
}

/* title + menu */
.titlebar {
    height: 26px;
    display: flex;
    align-items: center;
    justify-content: space-between;
    font-family: "Open Sans", "Noto Sans CJK SC", sans-serif;
    overflow: hidden;
}

.brand {
    font: bold 12px/16px "DejaVu Sans", sans-serif;
    color: #009090;
    margin-right: -2px;
}

.topgrip {
    position: absolute;
    top: 0;
    left: 613px;
    width: 500px;
    height: 3px;
    background: #dcdfdc;
    border-bottom: 2px solid #aaa;
    border-radius: 0 0 4px 4px;
    box-shadow: 0 2px 3px #ccc;
}

.menubar {
    height: 27px;
    flex: none;
    display: flex;
    align-items: center;
    gap: 15px;
    margin-left: -18px;
    padding-bottom: 2px;
    background: #c5d7d4;
    font-family: "Open Sans", "Noto Sans CJK SC", sans-serif;
    font-size: 11px;
}

.menubar a {
    color: #1c1c1c;
    text-decoration: none;
}

.menubar .wide {
    margin-left: 5px;
}

/* toolbars */
.row {
    height: 34px;
    flex: none;
    display: flex;
    overflow: hidden;
}

.bar {
    display: flex;
    align-items: center;
    border-right: 1px solid #d6dadb;
    border-bottom: 1px solid #d6dadb;
    flex: none;
}

.cut1 { margin-left: -24px; }
.cut2 { margin-left: -21px; }
.from3 { margin-left: 293px; }
.from4 { margin-left: 296px; }
.from5 { margin-left: 299px; }
.cut6 { margin-left: -10px; }
.gap-s { margin-left: 4px; }
.gap-l { margin-left: 108px; }

.grip::before {
    content: "";
    width: 3px;
    height: 26px;
    margin: 0 2px 0 3px;
    background: repeating-linear-gradient(#aaa 0 2px, transparent 2px 4px);
}

.tb, .dd {
    width: 31px;
    height: 32px;
    padding: 0;
    border: 0;
    background: none;
    display: flex;
    align-items: center;
    justify-content: center;
    flex: none;
}

.tb svg {
    width: 24px;
    height: 24px;
    fill: none;
    stroke: #444;
    stroke-width: 1.2;
    overflow: visible;
}

.tb.off svg { stroke: #a8a8a8; }
.tb svg .r { stroke: #b53a40; }
.tb svg .b { stroke: #3c3c98; }

.tb text {
    font-family: "Liberation Sans", sans-serif;
    fill: #333;
    stroke: none;
}

.tb .ser { font: bold 22px "Liberation Serif", serif; }
.tb .it { font-style: italic; font-size: 20px; fill: #2f3cb0; }
.t7 { font-size: 7px; font-weight: bold; }
.t8 { font-size: 8px; font-weight: bold; }
.t9 { font-size: 9px; }
.t11 { font-size: 11px; }
.t12n { font-size: 12px; }
.t12 { font-size: 12px; font-weight: bold; }
.tb .tb1 { fill: #33449a; }
.tb .tr { fill: #b53a40; }

.dd {
    width: 13px;
}

.dd::before {
    content: "";
    border: 3px solid transparent;
    border-top: 4px solid #111;
    border-bottom: 0;
}

.dd.more {
    width: 12px;
    padding-top: 14px;
}

.sep {
    width: 6px;
    height: 30px;
    background: linear-gradient(#d3d6d8, #d3d6d8) center / 1px 100% no-repeat;
}

.search {
    width: 125px;
    height: 20px;
    margin: 0 3px;
    border: 1px solid #999;
    display: flex;
    align-items: center;
    background: #fff;
}

.search input {
    border: 0;
    padding: 0 0 0 1px;
    flex: 1;
    min-width: 0;
    height: 16px;
    font-size: 11px;
    outline: 0;
    background: none;
}

.search svg {
    width: 18px;
    height: 16px;
    fill: none;
    stroke: #444;
    stroke-width: 1.5;
}

.selbar {
    height: 31px;
}

.selbar .bar {
    border: 0;
}

.selbar .tb { width: 23px; }
.selbar .tb svg { width: 16px; height: 16px; }

/* work area */
.work {
    flex: 1;
    min-height: 0;
    display: flex;
}

.resource {
    width: 268px;
    flex: none;
    border-right: 1px solid #7c8a91;
    display: grid;
    grid-template-columns: 242px 16px;
    grid-template-rows: 1fr 15px;
    padding-bottom: 7px;
    background: #fff;
}

.doc {
    overflow: hidden;
    min-height: 0;
    display: flex;
    flex-direction: column;
    justify-content: space-between;
    padding-top: 423px;
}

.doc-text {
    margin-left: -23px;
    font-size: 10px;
    line-height: 13px;
    white-space: nowrap;
    color: #000;
}

.doc-text a {
    display: block;
    font-size: 11px;
    font-weight: bold;
    color: #0000c0;
    margin: 0 0 50px 12px;
}

.doc-text p {
    margin: 0 0 10px;
}

.thumbs {
    display: flex;
    gap: 12px;
    margin-left: -42px;
    height: 16px;
}

.thumb {
    width: 84px;
    height: 60px;
    flex: none;
    border: 2px solid #3a67b5;
}

.thumb svg {
    width: 80px;
    height: 16px;
    fill: none;
}

.vscroll, .hscroll {
    background: #efefef;
    display: flex;
    justify-content: space-between;
}

.vscroll {
    flex-direction: column;
    padding-bottom: 1px;
}

.vthumb {
    height: 613px;
    width: 15px;
    background: #cdcdcd;
}

.hscroll {
    grid-column: 1 / 3;
    padding-right: 17px;
}

.hthumb {
    width: 150px;
    background: linear-gradient(#f4f4f4, #f4f4f4) 49px 3px / 10px 9px no-repeat #cdcdcd;
}

.vscroll svg, .hscroll svg {
    width: 16px;
    height: 16px;
    fill: none;
    stroke: #444;
    stroke-width: 2;
}

.viewport {
    flex: 1;
    overflow: hidden;
    background: linear-gradient(#b1b4b5, #babbbc 8%, #cfd1d2 40%, #e3e5e7 72%, #e6e7e8);
}

.scene {
    width: 1460px;
    height: 764px;
}

.part {
    fill: none;
    stroke: #2d3436;
    stroke-linejoin: round;
}

.part * {
    vector-effect: non-scaling-stroke;
}

.axes text {
    font: 13px "Open Sans", sans-serif;
}

.axes .sm {
    font-size: 11px;
}

/* bottom bars */
.sketch {
    height: 35px;
    border-bottom: 1px solid #a8a9ab;
}

.mini {
    width: 23px;
    height: 20px;
    border: 1px solid #aaa;
    background: #fff;
    color: #777;
    padding: 0;
    margin-right: 7px;
}

.finish {
    border: 0;
    background: none;
    padding: 0;
    width: 76px;
    display: flex;
    align-items: center;
    gap: 4px;
    font-size: 11px;
    color: #a4a4a4;
    white-space: nowrap;
}

.finish svg {
    width: 24px;
    height: 24px;
    background: #dcdcdc;
    border: 1px solid #bbb;
}

.status {
    height: 21px;
    flex: none;
    margin-left: -16px;
    line-height: 19px;
    font-size: 11px;
    color: #000;
}

.taskbar {
    height: 40px;
    flex: none;
    background: linear-gradient(90deg, #13283a, #102a44);
    border-top: 1px solid #3d5566;
    display: flex;
    justify-content: space-between;
    align-items: center;
    padding-left: 5px;
    overflow: hidden;
}

.app {
    width: 46px;
    height: 38px;
    border: 1px solid #dde3ea;
    background: #76828f;
    padding: 0;
    display: flex;
    align-items: center;
    justify-content: center;
}

.app svg {
    width: 28px;
    height: 28px;
}

.tray {
    display: flex;
    align-items: center;
    color: #fff;
    margin-right: -14px;
}

.sogou { width: 16px; height: 16px; margin-right: 29px; }
.up { width: 8px; height: 8px; margin-right: 13px; }
.net { width: 17px; height: 17px; margin-right: 7px; }

.clock {
    font: 12px/16px "Open Sans", sans-serif;
    padding-top: 18px;
    margin-left: 3px;
}

/* sheet dialog */
.dialog {
    position: absolute;
    top: 123px;
    left: -32px;
    width: 328px;
    background: #e6e6e6;
    border-right: 1px solid #c4c4c4;
    border-bottom: 1px solid #b0b0b0;
    padding-bottom: 9px;
}

.dlg-head {
    height: 24px;
    background: #5b8681;
    color: #fff;
    font-size: 13px;
    display: flex;
    align-items: center;
    gap: 4px;
    padding: 0 6px 0 32px;
}

.dlg-head span {
    flex: 1;
}

.dlg-head button {
    border: 0;
    padding: 0;
    background: none;
}

.dlg-head svg {
    width: 16px;
    height: 16px;
    fill: none;
    stroke: #fff;
    stroke-width: 2;
}

.sect {
    margin: 4px 5px 0;
    background: #fdfdfd;
    border-bottom: 1px solid #c8c8c8;
    padding: 0 9px 8px 10px;
}

.sect h3 {
    margin: 0 -4px 0 0;
    height: 29px;
    display: flex;
    align-items: center;
    justify-content: space-between;
    font-size: 13px;
    font-weight: normal;
    color: #2f8298;
}

.sect h3 svg {
    width: 14px;
    height: 14px;
    fill: none;
    stroke: #2f8298;
    stroke-width: 1.8;
}

.opt {
    height: 23px;
    display: flex;
    align-items: center;
}

.opt input {
    width: 13px;
    height: 13px;
    margin-right: 4px;
}

.opt span {
    padding: 1px;
}

.focus {
    outline: 1px dotted #000;
}

.field {
    height: 23px;
    margin: 2px 0 0;
    display: flex;
    justify-content: space-between;
    align-items: center;
}

.field input, .field select, #sheets {
    border: 1px solid #a0a0a0;
    background: #fff;
    height: 23px;
    width: 84px;
    padding: 0 5px;
}

.field label {
    flex: 1;
}

.field .num {
    width: 82px;
    padding: 0 4px;
    font: 15px "Liberation Mono", monospace;
}

.field select {
    width: 141px;
    height: 24px;
    appearance: none;
}

.pick {
    position: relative;
}

.pick::after {
    content: "";
    position: absolute;
    right: 5px;
    top: 10px;
    border: 4px solid transparent;
    border-top: 5px solid #111;
    border-bottom: 0;
}

.field .full {
    width: 100%;
}

.field .second {
    margin-left: 17px;
}

.names {
    padding-bottom: 7px;
}

.names h3 {
    height: 26px;
}

.line {
    display: block;
    height: 27px;
    line-height: 28px;
}

#sheets {
    display: block;
    width: calc(100% - 2px);
    height: 76px;
    resize: none;
}

#sheets + .line {
    height: 23px;
    line-height: 26px;
}

.closed {
    padding-bottom: 0;
}

.closed h3 {
    height: 23px;
}

.actions {
    display: flex;
    justify-content: flex-end;
    gap: 5px;
    padding: 11px 15px 0;
}

.actions button {
    width: 54px;
    height: 25px;
    padding: 0;
    border: 1px solid #adb1b3;
    background: #c8cacd;
}

.actions .ok {
    background: #96cae4;
    border-color: #4a9dbb;
}

/* overlays */
.ink {
    position: absolute;
    top: 0;
    left: 0;
    width: 1728px;
    height: 1080px;
    fill: none;
    stroke: #d11010;
    stroke-width: 3;
    stroke-linejoin: round;
    pointer-events: none;
}

.caption {
    position: absolute;
    left: 609px;
    top: 970px;
    font: 38px/44px "Liberation Serif", "Noto Sans CJK SC", serif;
    color: #cc1a1a;
    white-space: nowrap;
}

.caption b {
    color: #dd0c0c;
}

.caption span {
    margin-left: 50px;
}

.ball {
    position: absolute;
    left: 1554px;
    top: 984px;
    width: 48px;
    height: 48px;
    border: 2px solid #fff;
    border-radius: 50%;
    background: linear-gradient(200deg, #4a8ff0, #5aa2f2 60%, #74c4f6);
    box-shadow: 0 1px 4px #bbb;
    color: #fff;
    font: 14px/44px "Open Sans", sans-serif;
    text-align: center;
}
```
